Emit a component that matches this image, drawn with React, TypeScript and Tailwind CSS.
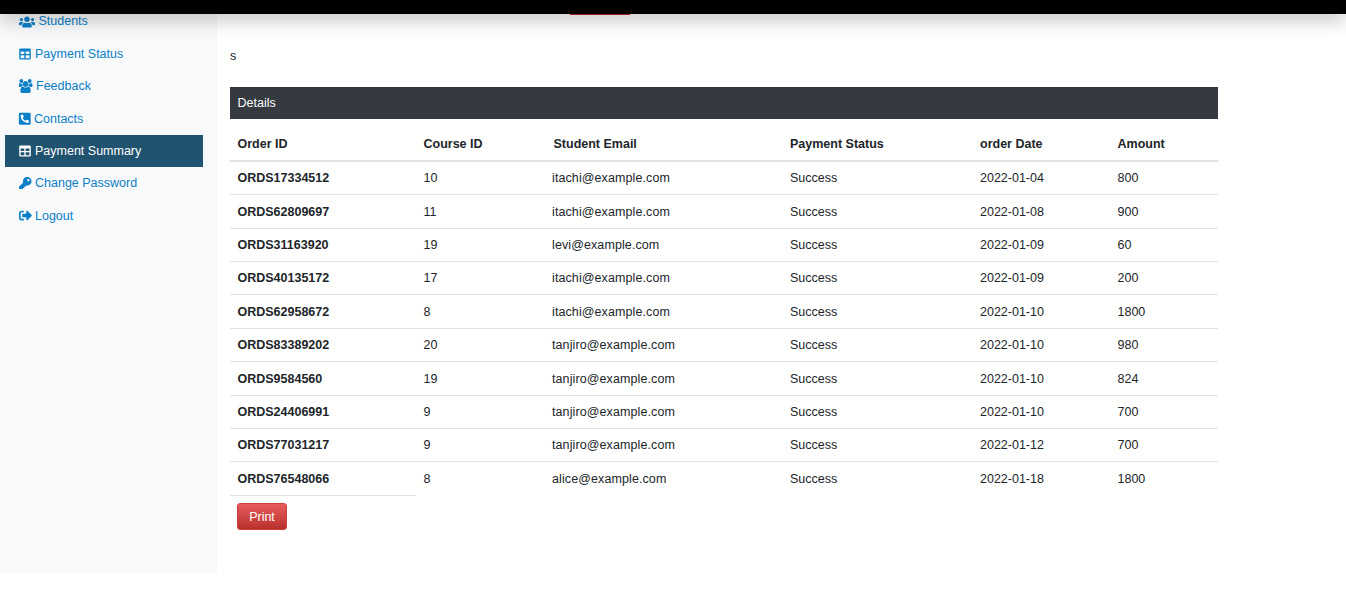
import { FaKey, FaPhoneSquareAlt, FaSignOutAlt, FaUsers } from "react-icons/fa";

const rows = [
  ["ORDS17334512", "10", "itachi@example.com", "2022-01-04", "800"],
  ["ORDS62809697", "11", "itachi@example.com", "2022-01-08", "900"],
  ["ORDS31163920", "19", "levi@example.com", "2022-01-09", "60"],
  ["ORDS40135172", "17", "itachi@example.com", "2022-01-09", "200"],
  ["ORDS62958672", "8", "itachi@example.com", "2022-01-10", "1800"],
  ["ORDS83389202", "20", "tanjiro@example.com", "2022-01-10", "980"],
  ["ORDS9584560", "19", "tanjiro@example.com", "2022-01-10", "824"],
  ["ORDS24406991", "9", "tanjiro@example.com", "2022-01-10", "700"],
  ["ORDS77031217", "9", "tanjiro@example.com", "2022-01-12", "700"],
  ["ORDS76548066", "8", "alice@example.com", "2022-01-18", "1800"],
];

function TableIcon() {
  return (
    <svg viewBox="0 0 12 12" className="h-[12px] w-[12px] shrink-0" fill="currentColor" fillRule="evenodd">
      <path d="M1.5 0.5h9a1.3 1.3 0 0 1 1.3 1.3v8.4a1.3 1.3 0 0 1-1.3 1.3h-9a1.3 1.3 0 0 1-1.3-1.3v-8.4a1.3 1.3 0 0 1 1.3-1.3zM1.6 3.6v2.5h3.7v-2.5zM6.7 3.6v2.5h3.7v-2.5zM1.6 7.3v2.9h3.7v-2.9zM6.7 7.3v2.9h3.7v-2.9z" />
    </svg>
  );
}

function GroupIcon() {
  return (
    <svg viewBox="0 0 1920 1792" preserveAspectRatio="none" className="h-[14px] w-[14px] shrink-0" fill="currentColor">
      <path d="M529 896q-162 5-265 128h-134q-82 0-138-40.5t-56-118.5q0-353 124-353 6 0 43.5 21t97.5 42.5 119 21.5q67 0 133-23-5 37-5 66 0 139 81 256zm1071 637q0 120-73 189.5t-194 69.5h-874q-121 0-194-69.5t-73-189.5q0-53 3.5-103.5t14-109 26.5-108.5 43-97.5 62-81 85.5-53.5 111.5-20q10 0 43 21.5t73 48 107 48 135 21.5 135-21.5 107-48 73-48 43-21.5q61 0 111.5 20t85.5 53.5 62 81 43 97.5 26.5 108.5 14 109 3.5 103.5zm-1024-1277q0 106-75 181t-181 75-181-75-75-181 75-181 181-75 181 75 75 181zm704 384q0 159-112.5 271.5t-271.5 112.5-271.5-112.5-112.5-271.5 112.5-271.5 271.5-112.5 271.5 112.5 112.5 271.5zm576 225q0 78-56 118.5t-138 40.5h-134q-103-123-265-128 81-117 81-256 0-29-5-66 66 23 133 23 59 0 119-21.5t97.5-42.5 43.5-21q124 0 124 353zm-128-609q0 106-75 181t-181 75-181-75-75-181 75-181 181-75 181 75 75 181z" />
    </svg>
  );
}

const nav = [
  { label: "Students", icon: <FaUsers className="shrink-0 text-[16px]" />, gap: "gap-[3.5px]", text: "" },
  { label: "Payment Status", icon: <TableIcon />, gap: "gap-[4px]", text: "" },
  { label: "Feedback", icon: <GroupIcon />, gap: "gap-[3px]", text: "" },
  { label: "Contacts", icon: <FaPhoneSquareAlt className="-ml-[1px] shrink-0 text-[13.5px]" />, gap: "gap-[2.5px]", text: "pt-[2px]" },
  { label: "Payment Summary", icon: <TableIcon />, gap: "gap-[4px]", text: "pt-[2px]", active: true },
  { label: "Change Password", icon: <FaKey className="shrink-0 text-[12.5px]" />, gap: "gap-[3.5px]", text: "" },
  { label: "Logout", icon: <FaSignOutAlt className="shrink-0 text-[13px]" />, gap: "gap-[3px]", text: "pt-[2px]" },
];

export default function App() {
  return (
    <div className="relative h-[595px] overflow-hidden bg-white font-['Liberation_Sans',Arial,sans-serif] text-[12.5px] text-[#212529]">
      <div className="absolute top-0 left-[569px] h-[15px] w-[62px] rounded-b-[2px] bg-[#b92c28]" />
      <div className="absolute inset-x-0 top-0 z-10 h-[14px] bg-black shadow-[0_4px_20px_rgba(0,0,0,0.3)]" />

      <div className="flex">
        <aside className="h-[573px] w-[217px] shrink-0 bg-[#f8f9fa] pt-[5.4px] pl-[5px]">
          {nav.map((item) => (
            <div
              key={item.label}
              className={`flex h-[32.33px] w-[198px] items-center pl-[14px] ${item.gap} ${
                item.active ? "bg-[#20536f] text-white" : "text-[#0b7fc7]"
              }`}
            >
              {item.icon}
              <span className={item.text}>{item.label}</span>
            </div>
          ))}
        </aside>

        <main className="box-content w-[988px] pt-[49px] pl-[13px]">
          <p className="h-[38px] leading-[15px]">s</p>
          <div className="flex h-[32px] items-center bg-[#343a40] pl-[7.5px] text-white">Details</div>
          <table className="w-[988px] table-fixed border-collapse">
            <colgroup>
              <col className="w-[186px]" />
              <col className="w-[128.5px]" />
              <col className="w-[238px]" />
              <col className="w-[190px]" />
              <col className="w-[137.5px]" />
              <col className="w-[108px]" />
            </colgroup>
            <thead>
              <tr className="h-[42.3px] border-b-2 border-[#dee2e6] text-left align-bottom font-bold">
                <th className="pb-[7px] pl-[7.5px]">Order ID</th>
                <th className="pb-[7px] pl-[7.5px]">Course ID</th>
                <th className="pb-[7px] pl-[9px]">Student Email</th>
                <th className="pb-[7px] pl-[7.5px]">Payment Status</th>
                <th className="pb-[7px] pl-[7.5px]">order Date</th>
                <th className="pb-[7px] pl-[7.5px]">Amount</th>
              </tr>
            </thead>
            <tbody>
              {rows.map((r, i) => {
                const last = i === rows.length - 1;
                const pad = i === 1 || i === 6 ? "pt-[1.6px]" : "pt-[0.6px]";
                return (
                  <tr key={r[0]} className={`h-[33.42px] ${last ? "" : "border-b border-[#dee2e6]"}`}>
                    <th className={`${pad} pl-[7.5px] text-left font-bold ${last ? "border-b border-[#dee2e6]" : ""}`}>{r[0]}</th>
                    <td className={`${pad} pl-[7.5px]`}>{r[1]}</td>
                    <td className={`${pad} pl-[7.5px] tracking-[0.1px]`}>{r[2]}</td>
                    <td className={`${pad} pl-[7.5px]`}>Success</td>
                    <td className={`${pad} pl-[7.5px]`}>{r[3]}</td>
                    <td className={`${pad} pl-[7.5px]`}>{r[4]}</td>
                  </tr>
                );
              })}
            </tbody>
          </table>
          <button className="mt-[7px] ml-[7px] h-[27px] w-[50px] rounded-[3px] border border-[#c9403c] bg-gradient-to-b from-[#e85c5c] to-[#b9302c] pt-[2px] text-white">
            Print
          </button>
        </main>
      </div>
    </div>
  );
}
